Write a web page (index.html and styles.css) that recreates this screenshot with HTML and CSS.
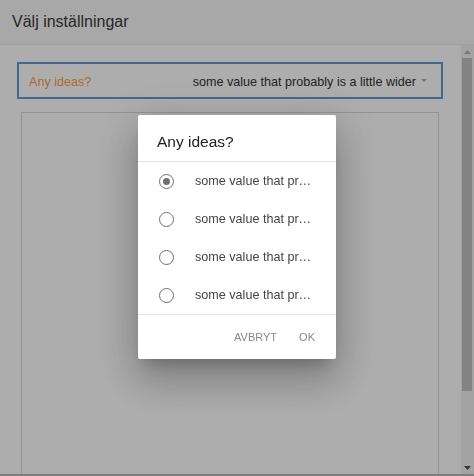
FILE: index.html
```html
<!DOCTYPE html>
<html lang="sv">
<head>
<meta charset="utf-8">
<title>Välj inställningar</title>
<link rel="stylesheet" href="styles.css">
</head>
<body>
<div class="app">
  <header class="topbar">Välj inställningar</header>
  <div class="main-row">
    <main class="content">
      <div class="select">
        <span class="select-label">Any ideas?</span>
        <span class="select-value">some value that probably is a little wider</span>
        <span class="select-arrow"></span>
      </div>
      <div class="panel"></div>
    </main>
    <div class="scrollbar">
      <div class="sb-btn"><svg width="7" height="4" viewBox="0 0 7 4"><polygon points="0,4 7,4 3.5,0" class="sb-up"/></svg></div>
      <div class="sb-track"><div class="sb-thumb"></div></div>
      <div class="sb-btn"><svg width="7" height="4" viewBox="0 0 7 4"><polygon points="0,0 7,0 3.5,4" class="sb-down"/></svg></div>
    </div>
  </div>
  <div class="bottom-edge"></div>
</div>

<div class="backdrop">
  <div class="dialog">
    <div class="dialog-title">Any ideas?</div>
    <div class="dialog-list">
      <div class="option"><span class="radio checked"></span><span class="option-text">some value that probably is a little wider</span></div>
      <div class="option"><span class="radio"></span><span class="option-text">some value that probably is a little wider</span></div>
      <div class="option"><span class="radio"></span><span class="option-text">some value that probably is a little wider</span></div>
      <div class="option"><span class="radio"></span><span class="option-text">some value that probably is a little wider</span></div>
    </div>
    <div class="dialog-actions">
      <span class="btn">AVBRYT</span>
      <span class="btn">OK</span>
    </div>
  </div>
</div>
</body>
</html>
```

FILE: styles.css
```css
html, body {
  margin: 0;
  padding: 0;
  width: 474px;
  height: 476px;
  overflow: hidden;
  font-family: "Liberation Sans", Arial, sans-serif;
  background: #ffffff;
}

.app {
  display: flex;
  flex-direction: column;
  height: 476px;
}

.topbar {
  flex: 0 0 45px;
  height: 45px;
  box-sizing: border-box;
  display: flex;
  align-items: center;
  padding: 0 0 1px 12px;
  font-size: 16px;
  color: #3a3a3a;
  background: #f8f8f8;
  border-bottom: 1px solid #ececec;
}

.main-row {
  flex: 1;
  display: flex;
  min-height: 0;
}

.content {
  flex: 1;
  display: flex;
  flex-direction: column;
  padding: 17px 18px 0 17px;
  background: #ffffff;
}

.select {
  height: 37px;
  box-sizing: border-box;
  border: 2px solid #5f9ad8;
  display: flex;
  align-items: center;
  padding: 0 14px 0 10px;
  font-size: 12.6px;
}

.select-label {
  color: #ff9c45;
  flex: 1;
  padding-top: 2px;
}

.select-value {
  color: #333333;
  padding-top: 2px;
}

.select-arrow {
  margin-left: 5px;
  width: 0;
  height: 0;
  border-left: 3px solid transparent;
  border-right: 3px solid transparent;
  border-top: 3px solid #a8a8a8;
}

.panel {
  flex: 1;
  margin: 13px 4px 0;
  border: 1px solid #d8d8d8;
  border-bottom: none;
  background: #ffffff;
}

.scrollbar {
  flex: 0 0 13px;
  display: flex;
  flex-direction: column;
  background: #f1f1f1;
}

.sb-btn {
  height: 13px;
  flex: 0 0 13px;
  display: flex;
  align-items: center;
  justify-content: center;
}

.sb-up { fill: #b4b4b4; }
.sb-down { fill: #505050; }

.sb-track {
  flex: 1;
  padding-left: 1px;
}

.sb-thumb {
  width: 10px;
  height: 333px;
  background: #c1c1c1;
}

.bottom-edge {
  height: 2px;
  flex: 0 0 2px;
  background: #b8b8b8;
}

.backdrop {
  position: fixed;
  inset: 0;
  background: rgba(0, 0, 0, 0.32);
  display: flex;
  justify-content: center;
  align-items: flex-start;
  padding-top: 115px;
}

.dialog {
  width: 198px;
  background: #ffffff;
  border-radius: 2px;
  box-shadow: 0 11px 15px -7px rgba(0,0,0,0.22), 0 24px 38px 3px rgba(0,0,0,0.16), 0 9px 46px 8px rgba(0,0,0,0.13);
}

.dialog-title {
  height: 47px;
  box-sizing: border-box;
  padding: 18px 19px 0;
  font-size: 15.5px;
  line-height: 18px;
  color: #222222;
  border-bottom: 1px solid #e4e4e4;
}

.option {
  height: 38px;
  display: flex;
  align-items: center;
  padding: 0 22px 0 21px;
}

.radio {
  flex: 0 0 15px;
  width: 15px;
  height: 15px;
  box-sizing: border-box;
  border: 1.6px solid #6e6e6e;
  border-radius: 50%;
  display: flex;
  align-items: center;
  justify-content: center;
  margin-right: 21px;
}

.radio.checked::after {
  content: "";
  width: 7px;
  height: 7px;
  border-radius: 50%;
  background: #6e6e6e;
}

.option-text {
  flex: 1;
  min-width: 0;
  font-size: 12.6px;
  color: #444444;
  white-space: nowrap;
  overflow: hidden;
  text-overflow: ellipsis;
}

.dialog-actions {
  height: 44px;
  border-top: 1px solid #e4e4e4;
  display: flex;
  justify-content: flex-end;
  align-items: center;
  gap: 2px;
  padding-right: 11px;
}

.btn {
  padding: 0 10px;
  font-size: 11px;
  color: #888888;
}
```
